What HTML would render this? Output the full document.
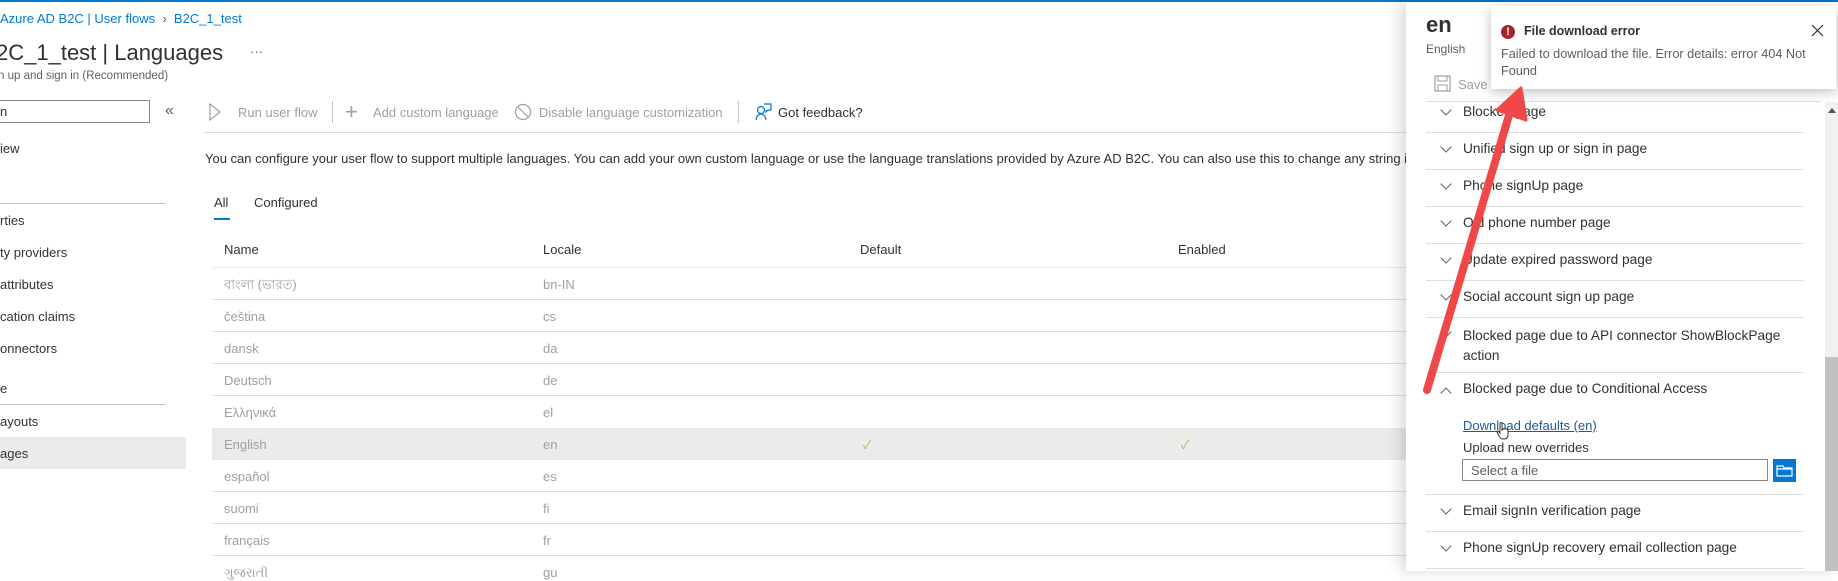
<!DOCTYPE html>
<html><head><meta charset="utf-8"><style>
*{margin:0;padding:0;box-sizing:border-box}
body{width:1838px;height:571px;overflow:hidden;background:#fff;position:relative;font-family:"Liberation Sans","Noto Sans CJK SC",sans-serif;color:#323130}
.a{position:absolute;white-space:nowrap}
.t{font-size:13px;line-height:16px}
.hl{position:absolute;height:1px;background:#e1dfdd}
.g{color:#a19f9d}
.acc{position:absolute;left:1463px;font-size:13.7px;color:#323130;white-space:nowrap}
.chev{position:absolute;left:1442px;width:8px;height:8px;border-right:1.3px solid #605e5c;border-bottom:1.3px solid #605e5c;transform:rotate(45deg)}
.al{position:absolute;left:1426px;width:378px;height:1px;background:#e1dfdd}
</style></head><body>
<div class="a" style="left:0;top:0;width:1838px;height:2px;background:#0078d4"></div>
<div class="a t" style="left:0;top:11px;color:#0078d4">Azure AD B2C | User flows <span style="color:#605e5c">&nbsp;›&nbsp;</span> B2C_1_test</div>
<div class="a" style="left:-4px;top:40px;font-size:22px;line-height:26px;color:#323130">2C_1_test | Languages</div>
<div class="a" style="left:250px;top:44px;font-size:13px;color:#605e5c">···</div>
<div class="a" style="left:-2px;top:70px;font-size:11.5px;color:#605e5c">n up and sign in (Recommended)</div>
<div class="a" style="left:-2px;top:100px;width:152px;height:23px;border:1px solid #8a8886"></div>
<div class="a t" style="left:0;top:104px">n</div>
<div class="a" style="left:165px;top:102px;font-size:16px;color:#605e5c">«</div>
<div class="a t" style="left:0;top:141px">iew</div>
<div class="hl" style="left:0;top:203px;width:166px;background:#c8c6c4"></div>
<div class="a t" style="left:0;top:213px">rties</div>
<div class="a t" style="left:0;top:245px">ty providers</div>
<div class="a t" style="left:0;top:277px">attributes</div>
<div class="a t" style="left:0;top:309px">cation claims</div>
<div class="a t" style="left:0;top:341px">onnectors</div>
<div class="a t" style="left:0;top:381px">e</div>
<div class="hl" style="left:0;top:404px;width:166px;background:#c8c6c4"></div>
<div class="a t" style="left:0;top:414px">ayouts</div>
<div class="a" style="left:0;top:437px;width:186px;height:32px;background:#edebe9"></div>
<div class="a t" style="left:0;top:446px">ages</div>
<!-- toolbar -->
<svg class="a" style="left:208px;top:102px" width="14" height="20"><path d="M2 2 L12 10 L2 18 Z" fill="none" stroke="#a19f9d" stroke-width="1.2"/></svg>
<div class="a t g" style="left:238px;top:105px">Run user flow</div>
<div class="a" style="left:332px;top:101px;width:1px;height:22px;background:#c8c6c4"></div>
<div class="a" style="left:345px;top:104px;font-size:22px;line-height:16px;color:#a19f9d">+</div>
<div class="a t g" style="left:373px;top:105px">Add custom language</div>
<svg class="a" style="left:514px;top:103px" width="18" height="18"><circle cx="9" cy="9" r="7.5" fill="none" stroke="#a19f9d" stroke-width="1.2"/><path d="M4 4 L14 14" stroke="#a19f9d" stroke-width="1.2"/></svg>
<div class="a t g" style="left:539px;top:105px">Disable language customization</div>
<div class="a" style="left:738px;top:101px;width:1px;height:22px;background:#c8c6c4"></div>
<svg class="a" style="left:754px;top:102px" width="20" height="20"><circle cx="7" cy="8" r="3.5" fill="none" stroke="#0078d4" stroke-width="1.2"/><path d="M2 18 Q3 12 7 12 Q11 12 12 18 M10 2 H17 V8 H14 L12 10 V8" fill="none" stroke="#0078d4" stroke-width="1.2"/></svg>
<div class="a t" style="left:778px;top:105px">Got feedback?</div>
<div class="hl" style="left:203px;top:132px;width:1203px"></div>
<div class="a t" style="left:205px;top:151px">You can configure your user flow to support multiple languages. You can add your own custom language or use the language translations provided by Azure AD B2C. You can also use this to change any string in</div>
<div class="a t" style="left:214px;top:195px">All</div>
<div class="a" style="left:214px;top:218px;width:16px;height:2px;background:#0078d4"></div>
<div class="a t" style="left:254px;top:195px">Configured</div>
<div class="a t" style="left:224px;top:242px">Name</div>
<div class="a t" style="left:543px;top:242px">Locale</div>
<div class="a t" style="left:860px;top:242px">Default</div>
<div class="a t" style="left:1178px;top:242px">Enabled</div>
<div class="hl" style="left:212px;top:267px;width:1194px;background:#edebe9"></div>
<div class="a" style="left:212px;top:428px;width:1194px;height:32px;background:#edebe9"></div>
<div class="a" style="left:863px;top:436px;font-size:12px;color:#8cbf6a">✓</div>
<div class="a" style="left:1181px;top:436px;font-size:12px;color:#8cbf6a">✓</div>
<div class="a t g" style="left:224px;top:277px">বাংলা (ভারত)</div><div class="a t g" style="left:543px;top:277px">bn-IN</div>
<div class="a t g" style="left:224px;top:309px">čeština</div><div class="a t g" style="left:543px;top:309px">cs</div>
<div class="a t g" style="left:224px;top:341px">dansk</div><div class="a t g" style="left:543px;top:341px">da</div>
<div class="a t g" style="left:224px;top:373px">Deutsch</div><div class="a t g" style="left:543px;top:373px">de</div>
<div class="a t g" style="left:224px;top:405px">Ελληνικά</div><div class="a t g" style="left:543px;top:405px">el</div>
<div class="a t g" style="left:224px;top:437px">English</div><div class="a t g" style="left:543px;top:437px">en</div>
<div class="a t g" style="left:224px;top:469px">español</div><div class="a t g" style="left:543px;top:469px">es</div>
<div class="a t g" style="left:224px;top:501px">suomi</div><div class="a t g" style="left:543px;top:501px">fi</div>
<div class="a t g" style="left:224px;top:533px">français</div><div class="a t g" style="left:543px;top:533px">fr</div>
<div class="a t g" style="left:224px;top:565px">ગુજરાતી</div><div class="a t g" style="left:543px;top:565px">gu</div>
<div class="hl" style="left:212px;top:299px;width:1194px"></div>
<div class="hl" style="left:212px;top:331px;width:1194px"></div>
<div class="hl" style="left:212px;top:363px;width:1194px"></div>
<div class="hl" style="left:212px;top:395px;width:1194px"></div>
<div class="hl" style="left:212px;top:491px;width:1194px"></div>
<div class="hl" style="left:212px;top:523px;width:1194px"></div>
<div class="hl" style="left:212px;top:555px;width:1194px"></div>
<!-- panel -->
<div class="a" style="left:1406px;top:2px;width:432px;height:569px;background:#fff;box-shadow:-6px 0 14px rgba(0,0,0,0.15)"></div>
<div class="a" style="left:1426px;top:12px;font-size:22px;font-weight:bold;color:#323130">en</div>
<div class="a" style="left:1426px;top:42px;font-size:12px;color:#605e5c">English</div>
<svg class="a" style="left:1434px;top:75px" width="17" height="17"><rect x="1" y="1" width="15" height="15" fill="none" stroke="#a19f9d" stroke-width="1.2"/><rect x="4" y="1" width="9" height="5" fill="none" stroke="#a19f9d"/><rect x="4" y="10" width="9" height="6" fill="none" stroke="#a19f9d"/></svg>
<div class="a t g" style="left:1458px;top:77px">Save</div>
<div class="al" style="top:101px;width:395px"></div>
<div class="a" style="left:1825px;top:102px;width:13px;height:469px;background:#f1f1f1"></div>
<div class="a" style="left:1825px;top:357px;width:13px;height:214px;background:#c1c1c1"></div>
<div class="a" style="left:1828px;top:108px;width:0;height:0;border-left:4px solid transparent;border-right:4px solid transparent;border-bottom:5px solid #505050"></div>
<div class="chev" style="top:106px"></div><div class="acc" style="top:104px">Blocked page</div><div class="al" style="top:132px"></div>
<div class="chev" style="top:143px"></div><div class="acc" style="top:141px">Unified sign up or sign in page</div><div class="al" style="top:169px"></div>
<div class="chev" style="top:180px"></div><div class="acc" style="top:178px">Phone signUp page</div><div class="al" style="top:206px"></div>
<div class="chev" style="top:217px"></div><div class="acc" style="top:215px">Old phone number page</div><div class="al" style="top:243px"></div>
<div class="chev" style="top:254px"></div><div class="acc" style="top:252px">Update expired password page</div><div class="al" style="top:280px"></div>
<div class="chev" style="top:291px"></div><div class="acc" style="top:289px">Social account sign up page</div><div class="al" style="top:317px"></div>
<div class="chev" style="top:328px"></div><div class="acc" style="top:326px;line-height:20px">Blocked page due to API connector ShowBlockPage<br>action</div><div class="al" style="top:372px"></div>
<div class="chev" style="top:389px;transform:rotate(225deg)"></div><div class="acc" style="top:381px">Blocked page due to Conditional Access</div>
<div class="a" style="left:1463px;top:418px;font-size:13px;color:#1e5a96;text-decoration:underline">Download defaults (en)</div>
<div class="a" style="left:1463px;top:440px;font-size:13px">Upload new overrides</div>
<div class="a" style="left:1462px;top:459px;width:306px;height:22px;border:1px solid #8a8886"></div>
<div class="a" style="left:1471px;top:463px;font-size:13px;color:#605e5c">Select a file</div>
<div class="a" style="left:1773px;top:459px;width:23px;height:23px;background:#0078d4"></div>
<svg class="a" style="left:1776px;top:464px" width="17" height="13"><path d="M1 2 H7 L8 4 H16 V12 H1 Z M1 5 H16" fill="none" stroke="#fff" stroke-width="1.2"/></svg>
<svg class="a" style="left:1496px;top:421px" width="14" height="20"><path d="M4 2 Q5 1 6 2 V9 L7 8 Q8 7 9 8 L10 8 Q11 8 12 9 V14 Q12 18 8 18 H7 Q4 18 2 13 L1 11 Q1 10 2 10 L4 12 Z" fill="#fff" stroke="#323130" stroke-width="1"/></svg>
<div class="al" style="top:494px"></div>
<div class="chev" style="top:505px"></div><div class="acc" style="top:503px">Email signIn verification page</div><div class="al" style="top:531px"></div>
<div class="chev" style="top:542px"></div><div class="acc" style="top:540px">Phone signUp recovery email collection page</div><div class="al" style="top:568px"></div>
<!-- toast -->
<div class="a" style="left:1491px;top:6px;width:345px;height:83px;background:#fff;box-shadow:0 3px 12px rgba(0,0,0,0.25)"></div>
<div class="a" style="left:1501px;top:25px;width:14px;height:14px;border-radius:50%;background:#a4262c;color:#fff;font-size:11px;font-weight:bold;text-align:center;line-height:14px">!</div>
<div class="a" style="left:1524px;top:24px;font-size:12.5px;font-weight:bold;color:#323130">File download error</div>
<svg class="a" style="left:1811px;top:24px" width="13" height="13"><path d="M1 1 L12 12 M12 1 L1 12" stroke="#323130" stroke-width="1.2"/></svg>
<div class="a" style="left:1501px;top:46px;font-size:12.7px;line-height:17px;color:#605e5c">Failed to download the file. Error details: error 404 Not<br>Found</div>
<!-- arrow -->
<svg class="a" style="left:0;top:0" width="1838" height="571"><g fill="#f04848" stroke="#f04848" stroke-linecap="round" stroke-linejoin="round"><path d="M1427 390 L1510 112" stroke-width="8" fill="none"/><path d="M1521 88 L1497 110 L1526 120 Z" stroke-width="3"/></g></svg>
</body></html>
